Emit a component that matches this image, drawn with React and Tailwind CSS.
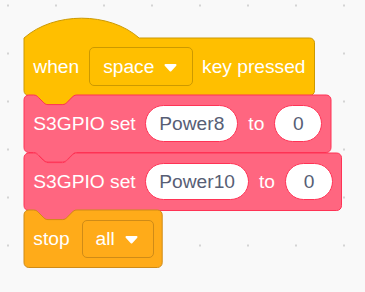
import React from 'react';

const NOTCH = 'c 2.4,0 3.6,1.2 4.8,2.4 l 4.8,4.8 c 1.2,1.2 2.4,2.4 4.8,2.4 h 14.4 c 2.4,0 3.6,-1.2 4.8,-2.4 l 4.8,-4.8 c 1.2,-1.2 2.4,-2.4 4.8,-2.4';
const TAB = 'c -2.4,0 -3.6,1.2 -4.8,2.4 l -4.8,4.8 c -1.2,1.2 -2.4,2.4 -4.8,2.4 h -14.4 c -2.4,0 -3.6,-1.2 -4.8,-2.4 l -4.8,-4.8 c -1.2,-1.2 -2.4,-2.4 -4.8,-2.4';

function blockPath(w, h, hat, cap) {
  const r = 4.8;
  const n = 9.6;
  const top = hat
    ? `M 0,0 c 30,-26.4 85.2,-26.4 115.2,0 H ${w - r}`
    : `M 0,${r} a ${r},${r} 0 0 1 ${r},-${r} H ${n} ${NOTCH} H ${w - r}`;
  const bottom = cap ? '' : `H ${n + 43.2} ${TAB}`;
  return `${top} a ${r},${r} 0 0 1 ${r},${r} V ${h - r} a ${r},${r} 0 0 1 -${r},${r} ${bottom} H ${r} a ${r},${r} 0 0 1 -${r},-${r} Z`;
}

function Block({ w, hat, cap, fill, stroke, className, children }) {
  const h = 57.5;
  return (
    <div className={`relative flex items-center h-[57.5px] ${className}`}>
      <svg className="absolute left-0 top-0 overflow-visible" width={w} height={h}>
        <path d={blockPath(w, h, hat, cap)} fill={fill} stroke={stroke} strokeWidth="1" />
      </svg>
      <div className="relative flex items-center pl-[9.8px]">{children}</div>
    </div>
  );
}

function Arrow() {
  return (
    <svg width="13" height="9" viewBox="0 0 13 9" className="translate-y-[1.5px]">
      <path d="M1.5,1.5 L11.5,1.5 L6.5,7 Z" fill="#fff" stroke="#fff" strokeWidth="2" strokeLinejoin="round" />
    </svg>
  );
}

function Dropdown({ label, className }) {
  return (
    <div className={`flex items-center h-[38.5px] rounded-[5px] border pl-[13px] pr-[15px] gap-[10px] ${className}`}>
      <span>{label}</span>
      <Arrow />
    </div>
  );
}

function Oval({ value }) {
  return (
    <div className="flex items-center justify-center h-[37px] min-w-[48px] px-[13px] rounded-full bg-white border border-[#ff3355] text-[#575e75]">
      {value}
    </div>
  );
}

export default function App() {
  return (
    <div
      className="w-[365px] h-[292px] overflow-hidden bg-[#f9f9f9] bg-[radial-gradient(circle,#d4d4d4_1px,transparent_1.3px)] bg-[length:48px_48px] bg-[position:-16px_-18.5px] text-white text-[19.2px] leading-none"
      style={{ fontFamily: '"Liberation Sans", Arial, sans-serif' }}
    >
      <div className="flex flex-col items-start pl-[23.5px] pt-[37.5px]">
        <Block w={290.5} hat fill="#ffbf00" stroke="#cc9900" className="w-[290.5px]">
          <span>when</span>
          <Dropdown label="space" className="ml-[10px] mr-[8.7px] bg-[#ffbf00] border-[#cc9900]" />
          <span>key pressed</span>
        </Block>
        <Block w={307} fill="#ff6680" stroke="#ff3355" className="w-[307px]">
          <span className="mr-[9.6px]">S3GPIO set</span>
          <Oval value="Power8" />
          <span className="mx-[10px]">to</span>
          <Oval value="0" />
        </Block>
        <Block w={317.5} fill="#ff6680" stroke="#ff3355" className="w-[317.5px]">
          <span className="mr-[9.6px]">S3GPIO set</span>
          <Oval value="Power10" />
          <span className="mx-[10px]">to</span>
          <Oval value="0" />
        </Block>
        <Block w={138.2} cap fill="#ffab19" stroke="#cf8b17" className="w-[138.2px]">
          <span className="mr-[12px]">stop</span>
          <Dropdown label="all" className="bg-[#ffab19] border-[#cf8b17]" />
        </Block>
      </div>
    </div>
  );
}
